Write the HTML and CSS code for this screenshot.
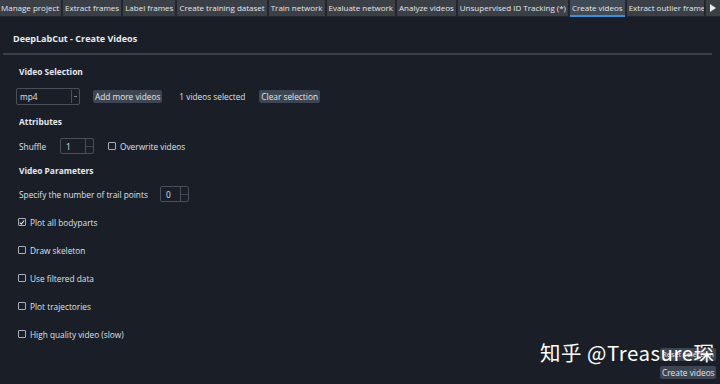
FILE: index.html
```html
<!DOCTYPE html>
<html>
<head>
<meta charset="utf-8">
<link rel="stylesheet" href="styles.css">
</head>
<body>
<div class="app">
  <div class="tabbar">
    <div class="tab">Manage project</div>
    <div class="tab">Extract frames</div>
    <div class="tab">Label frames</div>
    <div class="tab">Create training dataset</div>
    <div class="tab">Train network</div>
    <div class="tab">Evaluate network</div>
    <div class="tab">Analyze videos</div>
    <div class="tab">Unsupervised ID Tracking (*)</div>
    <div class="tab active">Create videos</div>
    <div class="tab clip">Extract outlier frames</div>
    <div class="tab arrow"><svg width="6" height="8" viewBox="0 0 6 8"><path d="M0 0L6 4L0 8Z" fill="#e8ecf0"/></svg></div>
  </div>
  <div class="content">
    <div class="title">DeepLabCut - Create Videos</div>
    <div class="sep"></div>
    <div class="form">
      <div class="heading">Video Selection</div>
      <div class="row r-sel">
        <div class="combo"><span>mp4</span><span class="combo-btn"></span></div>
        <div class="btn">Add more videos</div>
        <div class="lbl sel-count">1 videos selected</div>
        <div class="btn">Clear selection</div>
      </div>
      <div class="heading">Attributes</div>
      <div class="row r-attr">
        <div class="lbl">Shuffle</div>
        <div class="spin w33"><span>1</span><span class="spin-btns"><i></i><i></i></span></div>
        <label class="check"><span class="box"></span>Overwrite videos</label>
      </div>
      <div class="heading">Video Parameters</div>
      <div class="row r-trail">
        <div class="lbl trail-lbl">Specify the number of trail points</div>
        <div class="spin w28"><span>0</span><span class="spin-btns"><i></i><i></i></span></div>
      </div>
      <div class="checks">
        <label class="check"><span class="box on"><svg width="7" height="7" viewBox="0 0 7 7"><path d="M1 3.6L2.8 5.4L6 1.2" fill="none" stroke="#e6eaee" stroke-width="1.2"/></svg></span>Plot all bodyparts</label>
        <label class="check"><span class="box"></span>Draw skeleton</label>
        <label class="check"><span class="box"></span>Use filtered data</label>
        <label class="check"><span class="box"></span>Plot trajectories</label>
        <label class="check"><span class="box"></span>High quality video (slow)</label>
      </div>
    </div>
    <div class="bottom-btns">
      <div class="btn small upper">Reset selection</div>
      <div class="btn small">Create videos</div>
    </div>
    <div class="watermark">知乎 @Treasure琛</div>
  </div>
</div>
</body>
</html>
```
FILE: styles.css
```css
html, body {
  margin: 0;
  padding: 0;
  width: 720px;
  height: 384px;
  overflow: hidden;
  background: #1a1f27;
}
body {
  font-family: "Open Sans", "Noto Sans", "Noto Sans CJK SC", sans-serif;
  color: #dde2e8;
  font-size: 8.3px;
}
.app {
  width: 720px;
  height: 384px;
  display: flex;
  flex-direction: column;
}
.tabbar {
  display: flex;
  height: 17px;
  background: #23272d;
  gap: 2px;
  overflow: hidden;
  flex: none;
}
.tab {
  background: #3b4047;
  color: #e4e7eb;
  font-size: 8px;
  line-height: 16px;
  padding: 0 2px;
  white-space: nowrap;
  flex: none;
  height: 16px;
}
.tab:first-child { padding-left: 1px; }
.tab.active {
  background: #3f4a57;
  border-bottom: 2px solid #3d8fdc;
  height: 15px;
  line-height: 15px;
}
.tab.clip {
  flex: 1;
  min-width: 0;
  overflow: hidden;
}
.tab.arrow {
  width: 14px;
  padding: 0;
  display: flex;
  align-items: center;
  justify-content: center;
}
.content {
  position: relative;
  flex: 1;
  padding: 0 8px 0 3px;
}
.title {
  font-weight: 700;
  font-size: 9px;
  padding: 15px 0 0 10px;
  height: 19px;
  color: #e8ebef;
}
.sep {
  height: 2px;
  background: #3a4049;
  margin-top: 2px;
}
.form {
  padding: 11px 0 0 16px;
  display: flex;
  flex-direction: column;
}
.heading {
  font-weight: 700;
  font-size: 8.4px;
  height: 12px;
  line-height: 12px;
  color: #e6e9ed;
}
.row {
  display: flex;
  align-items: center;
}
.r-sel { margin-top: 10px; height: 17px; margin-left: -3px; }
.r-sel + .heading { margin-top: 11px; }
.r-attr { margin-top: 10px; height: 16px; }
.r-attr + .heading { margin-top: 11px; }
.r-trail { margin-top: 9px; height: 16px; }
.lbl { white-space: nowrap; }
.combo {
  border: 1px solid #4a5058;
  border-radius: 2px;
  display: flex;
  align-items: center;
  justify-content: space-between;
  padding-left: 3px;
  box-sizing: border-box;
  width: 64px;
  height: 17px;
}
.combo-btn {
  width: 7px;
  height: 13px;
  border-left: 1px solid #4a5058;
  position: relative;
}
.combo-btn::after {
  content: "";
  position: absolute;
  left: 2px; top: 6px;
  width: 3px; height: 1px;
  background: #7d848c;
}
.btn {
  background: #3c4551;
  border-radius: 2px;
  padding: 0 2px;
  height: 13px;
  line-height: 13px;
  white-space: nowrap;
  color: #e2e6ea;
}
.r-sel .btn:nth-child(2) { margin-left: 13px; }
.sel-count { margin-left: 17px; width: 80px; }
.r-attr .lbl { width: 41px; }
.trail-lbl { width: 141px; }
.spin {
  height: 16px;
  border: 1px solid #4a5058;
  border-radius: 2px;
  box-sizing: border-box;
  display: flex;
  align-items: center;
  justify-content: space-between;
  padding-left: 5px;
}
.w33 { width: 34px; }
.w28 { width: 29px; }
.spin-btns {
  display: flex;
  flex-direction: column;
  width: 7px;
  height: 14px;
  border-left: 1px solid #4a5058;
}
.spin-btns i {
  flex: 1;
  border-bottom: 1px solid #3e444c;
}
.spin-btns i:last-child { border-bottom: none; }
.check {
  display: flex;
  align-items: center;
  gap: 4px;
  white-space: nowrap;
  height: 12px;
}
.r-attr .check { margin-left: 14px; }
.box {
  width: 6px;
  height: 6px;
  border: 1px solid #a9afb6;
  border-radius: 1px;
  display: flex;
  align-items: center;
  justify-content: center;
}
.box.on svg { display: block; }
.checks {
  display: flex;
  flex-direction: column;
  gap: 16px;
  margin-top: 14px;
  margin-left: -1px;
}
.bottom-btns {
  position: absolute;
  right: 4px;
  bottom: 5px;
  display: flex;
  flex-direction: column;
  gap: 5px;
  align-items: flex-end;
}
.btn.small {
  width: 56px;
  box-sizing: border-box;
  text-align: center;
}
.btn.upper {
  font-size: 7.4px;
  padding: 0 1px;
}
.watermark {
  position: absolute;
  left: 540px;
  top: 320px;
  font-family: "Noto Sans CJK SC", sans-serif;
  font-size: 20.5px;
  color: #ffffff;
  white-space: nowrap;
  letter-spacing: 0.5px;
}
```
